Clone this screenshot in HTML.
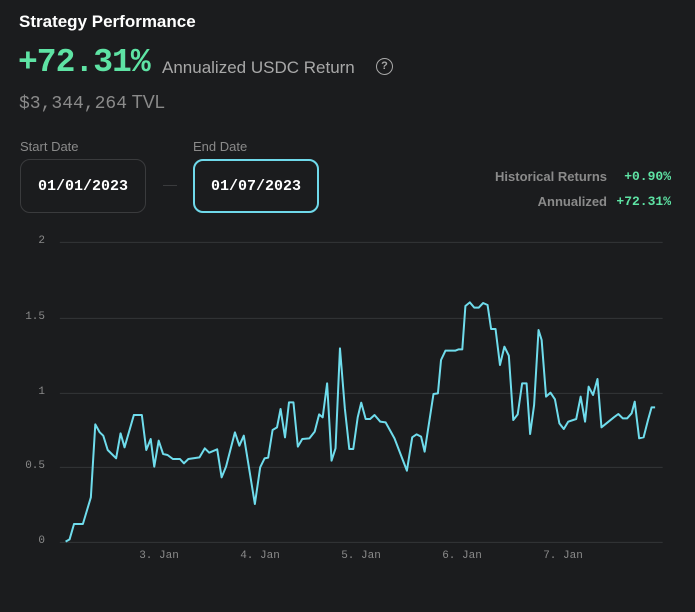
<!DOCTYPE html>
<html><head><meta charset="utf-8"><style>
html,body{margin:0;padding:0;width:695px;height:612px;background:#1b1c1e;overflow:hidden;font-family:"Liberation Sans",sans-serif;}
.a{position:absolute;white-space:nowrap}
.mono{font-family:"Liberation Mono",monospace}
.box{position:absolute;border-radius:10px;box-sizing:border-box;height:54px;top:159px;display:flex;align-items:center;justify-content:center;color:#fff;font-weight:bold;font-size:15px;font-family:"Liberation Mono",monospace;}
.yl{position:absolute;right:650px;font-family:"Liberation Mono",monospace;font-size:11px;color:#8a8a8a}
.xl{position:absolute;top:550px;width:60px;margin-left:-30px;text-align:center;font-family:"Liberation Mono",monospace;font-size:11px;color:#8a8a8a}
</style></head><body>
<div class="a" style="left:19px;top:12px;color:#fff;font-weight:bold;font-size:17px">Strategy Performance</div>
<div class="a mono" style="left:18px;top:44px;color:#5ee3a4;font-weight:bold;font-size:33px;letter-spacing:-1px">+72.31%</div>
<div class="a" style="left:162px;top:58px;color:#a8a8a8;font-size:17px">Annualized USDC Return</div>
<div class="a" style="left:376px;top:58px;width:15px;height:15px;border:1.5px solid #a8a8a8;border-radius:50%;color:#a8a8a8;font-size:11px;font-weight:bold;text-align:center;line-height:15px">?</div>
<div class="a" style="left:19px;top:92px;color:#8a8a8a;font-size:18px"><span class="mono">$3,344,264</span> TVL</div>
<div class="a" style="left:20px;top:139px;color:#8a8a8a;font-size:13px">Start Date</div>
<div class="a" style="left:193px;top:139px;color:#8a8a8a;font-size:13px">End Date</div>
<div class="box" style="left:20px;width:126px;border:1.5px solid #3a3b3d">01/01/2023</div>
<div class="a" style="left:163px;top:185px;width:14px;height:1px;background:#3a3b3d"></div>
<div class="box" style="left:193px;width:126px;border:2px solid #6fd9ea">01/07/2023</div>
<div class="a" style="right:88px;top:169px;color:#8a8a8a;font-size:13px;font-weight:bold">Historical Returns</div>
<div class="a mono" style="right:24px;top:169px;color:#5ee3a4;font-size:13px;font-weight:bold">+0.90%</div>
<div class="a" style="right:88px;top:194px;color:#8a8a8a;font-size:13px;font-weight:bold">Annualized</div>
<div class="a mono" style="right:24px;top:194px;color:#5ee3a4;font-size:13px;font-weight:bold">+72.31%</div>
<div class="yl" style="top:235px">2</div>
<div class="yl" style="top:311px">1.5</div>
<div class="yl" style="top:386px">1</div>
<div class="yl" style="top:460px">0.5</div>
<div class="yl" style="top:535px">0</div>
<div class="xl" style="left:159px">3. Jan</div>
<div class="xl" style="left:260px">4. Jan</div>
<div class="xl" style="left:361px">5. Jan</div>
<div class="xl" style="left:462px">6. Jan</div>
<div class="xl" style="left:563px">7. Jan</div>
<svg class="a" style="left:0;top:230px" width="695" height="382" viewBox="0 0 1568 1146" preserveAspectRatio="none">
<g stroke="#333538" stroke-width="1" vector-effect="non-scaling-stroke">
<line x1="135" y1="37" x2="1495" y2="37" vector-effect="non-scaling-stroke"/><line x1="135" y1="265" x2="1495" y2="265" vector-effect="non-scaling-stroke"/><line x1="135" y1="490" x2="1495" y2="490" vector-effect="non-scaling-stroke"/><line x1="135" y1="712" x2="1495" y2="712" vector-effect="non-scaling-stroke"/><line x1="135" y1="937" x2="1495" y2="937" vector-effect="non-scaling-stroke"/>
</g>
<polyline fill="none" stroke="#6fdcec" stroke-width="2" vector-effect="non-scaling-stroke" stroke-linejoin="round" points="148,935 157,928 167,882 187,882 205,802 215,583 225,607 233,617 243,660 262,685 272,610 281,652 302,555 320,555 330,660 340,627 348,710 358,632 368,672 378,675 390,687 406,687 415,700 425,687 450,682 462,655 472,668 490,658 500,742 510,710 530,607 540,647 550,617 575,822 587,712 597,685 605,683 615,600 625,592 633,537 643,622 652,517 662,517 672,650 682,627 698,625 710,605 720,553 728,562 738,460 748,692 757,655 767,355 778,535 788,657 797,657 807,562 815,518 825,567 835,567 845,555 858,575 870,577 890,625 918,722 930,622 940,613 950,620 958,665 978,492 988,490 995,390 1005,362 1027,362 1035,358 1043,358 1050,228 1060,217 1070,233 1080,233 1090,219 1100,225 1108,297 1118,297 1128,405 1138,350 1148,377 1158,570 1168,553 1178,460 1188,460 1196,612 1205,525 1215,300 1222,330 1232,500 1242,488 1252,508 1262,580 1272,597 1282,575 1300,567 1310,500 1320,575 1328,470 1338,495 1348,447 1357,592 1370,578 1385,562 1395,552 1405,565 1415,565 1425,550 1432,515 1442,625 1452,622 1462,570 1470,532 1478,532"/>
</svg>
</body></html>
